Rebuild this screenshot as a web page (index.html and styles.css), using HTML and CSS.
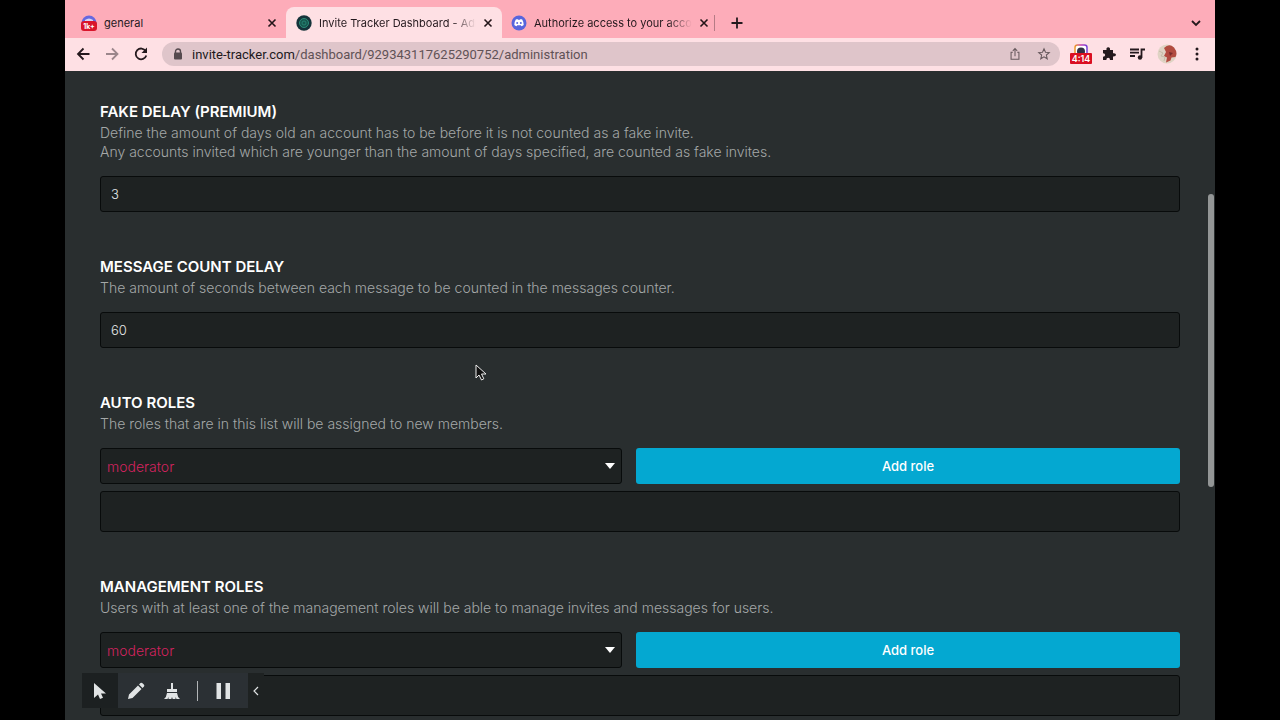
FILE: index.html
```html
<!DOCTYPE html>
<html lang="en">
<head>
<meta charset="utf-8">
<title>Invite Tracker Dashboard - Administration</title>
<link rel="stylesheet" href="styles.css">
</head>
<body>
<div class="window">
  <header class="browser">
    <nav class="tabs" aria-label="Tabs">
      <div class="tab tab-first">
        <svg class="favicon" viewBox="0 0 16 16"><circle cx="8" cy="8" r="7.5" fill="#6668df"/><path d="M4 5q4-3 8 0v2H4z" fill="#d7d5f4"/><rect x="0" y="6" width="16" height="10" rx="3" fill="#d9152b"/><text x="8" y="14" class="favicon-count">1k+</text></svg>
        <span class="tab-title">general</span>
        <button class="close" aria-label="Close general"><svg viewBox="0 0 10 10"><path d="M1.5 1.5l7 7m0-7l-7 7"/></svg></button>
      </div>
      <div class="tab tab-active">
        <svg class="favicon" viewBox="0 0 16 16"><circle cx="8" cy="8" r="7.7" fill="#15333a"/><circle cx="8" cy="8" r="4.5" fill="#17584f" stroke="#2b8b78"/><circle cx="8" cy="8" r="2" fill="none" stroke="#2a8b78" stroke-width=".8"/></svg>
        <span class="tab-title fade">Invite Tracker Dashboard - Administration</span>
        <button class="close" aria-label="Close Invite Tracker"><svg viewBox="0 0 10 10"><path d="M1.5 1.5l7 7m0-7l-7 7"/></svg></button>
      </div>
      <div class="tab tab-last">
        <svg class="favicon" viewBox="0 0 16 16"><circle cx="8" cy="8" r="7.5" fill="#5865dc"/><path d="M4.8 4.6l1.7-.5.4.7h2.2l.4-.7 1.7.5q1.6 2.6 1.5 5.5-1 .9-2.3 1.2l-.6-1H6.200l-.6 1q-1.300-.3-2.300-1.200-.1-2.900 1.500-5.500z" fill="#fff"/><circle cx="6.200" cy="8" r="1" fill="#5865dc"/><circle cx="9.800" cy="8" r="1" fill="#5865dc"/></svg>
        <span class="tab-title fade">Authorize access to your account</span>
        <button class="close" aria-label="Close Authorize access"><svg viewBox="0 0 10 10"><path d="M1.5 1.5l7 7m0-7l-7 7"/></svg></button>
      </div>
      <button class="icon new-tab" aria-label="New tab"><svg viewBox="0 0 16 16"><path d="M8 2.500v11M2.500 8h11" class="line"/></svg></button>
      <button class="icon tab-search" aria-label="Search tabs"><svg viewBox="0 0 16 16"><path d="M4 6l4 4 4-4" class="line"/></svg></button>
    </nav>
    <div class="toolbar">
      <button class="icon" aria-label="Back"><svg viewBox="0 0 16 16"><path d="M14.500 8H3M8.500 2.500L3 8l5.500 5.500" class="line"/></svg></button>
      <button class="icon muted" aria-label="Forward"><svg viewBox="0 0 16 16"><path d="M2 8h11.500M8 2.500L13.500 8 8 13.500" class="line"/></svg></button>
      <button class="icon" aria-label="Reload"><svg viewBox="0 0 16 16"><path d="M12.700 5A5.400 5.400 0 1 0 13.300 9.500" class="line"/><path d="M14 1.500V7H8.500z" fill="currentColor"/></svg></button>
      <div class="address">
        <svg class="lock" viewBox="0 0 12 12"><path d="M3.500 5V3.500a2.500 2.500 0 0 1 5 0V5" fill="none" stroke="#554a4e" stroke-width="1.400"/><rect x="2" y="4.500" width="8" height="7" rx="1" fill="#554a4e"/></svg>
        <a class="url" href="#"><span class="host">invite-tracker.com</span>/dashboard/929343117625290752/administration</a>
        <button class="icon soft" aria-label="Share"><svg viewBox="0 0 16 16"><path d="M5.500 6H3.500v8h9V6h-2M8 10.500V2M5.500 4.300L8 1.800l2.500 2.500" class="thin"/></svg></button>
        <button class="icon soft" aria-label="Bookmark"><svg viewBox="0 0 16 16"><path d="M8 2l1.700 4 4.300.4-3.300 2.800 1 4.300L8 11.200l-3.700 2.300 1-4.300L2 6.400 6.300 6z" class="thin"/></svg></button>
      </div>
      <div class="extensions">
        <button class="icon recorder" aria-label="Recorder"><svg viewBox="0 0 22 20"><defs><linearGradient id="ring"><stop stop-color="#ee9d26"/><stop offset=".5" stop-color="#c339b4"/><stop offset="1" stop-color="#7342d8"/></linearGradient></defs><path d="M5 12V3.500Q5 1 7.500 1h7Q17 1 17 3.500V12" fill="#fff" stroke="url(#ring)" stroke-width="1.500"/><circle cx="11" cy="7.500" r="4" fill="#303044"/><rect y="9" width="22" height="11" rx="1" fill="#da0f22"/><text x="11" y="18" class="recorder-time">4:14</text></svg></button>
        <button class="icon" aria-label="Extensions"><svg viewBox="0 0 16 16"><path d="M2 4h3.500q-.5-2.800 1.700-2.800T9 4h3v3.300q3-.4 3 1.500T12 10.500V14H9q0-2.300-1.800-2.300T5.300 14H2v-3.300q2.200 0 2.200-1.700T2 7.200z" fill="currentColor"/></svg></button>
        <button class="icon" aria-label="Media"><svg viewBox="0 0 16 16"><path d="M1 3.500h9M1 6.700h9M1 10h5M12.500 11.500v-8H16" class="line"/><circle cx="11" cy="11.500" r="2.200" fill="currentColor"/></svg></button>
        <button class="icon profile" aria-label="Profile"><svg viewBox="0 0 20 20"><circle cx="10" cy="10" r="9.500" fill="#dfd3c4"/><path d="M7 4q5-5 10-.5 4 5 1.500 9.500l-4 .5-1 3-4.500 2 1-5-3-1.500 2-4z" fill="#b24b40"/><path d="M2 7l4 2-2 3 4 1-1 4" fill="none" stroke="#c4bda8"/><path d="M12 8l4 1-3 3" fill="#792b2b"/></svg></button>
        <button class="icon" aria-label="Menu"><svg viewBox="0 0 16 16"><g fill="currentColor"><circle cx="8" cy="3" r="1.500"/><circle cx="8" cy="8" r="1.500"/><circle cx="8" cy="13" r="1.500"/></g></svg></button>
      </div>
    </div>
  </header>
  <main class="page">
    <section class="setting">
      <h2><label for="fake-delay">FAKE DELAY (PREMIUM)</label></h2>
      <p>Define the amount of days old an account has to be before it is not counted as a fake invite.<br>Any accounts invited which are younger than the amount of days specified, are counted as fake invites.</p>
      <input class="field" id="fake-delay" type="text" value="3">
    </section>
    <section class="setting">
      <h2><label for="count-delay">MESSAGE COUNT DELAY</label></h2>
      <p>The amount of seconds between each message to be counted in the messages counter.</p>
      <input class="field" id="count-delay" type="text" value="60">
    </section>
    <section class="setting">
      <h2><label for="auto-role">AUTO ROLES</label></h2>
      <p>The roles that are in this list will be assigned to new members.</p>
      <div class="role-row">
        <div class="select"><select class="field" id="auto-role"><option>moderator</option></select><svg viewBox="0 0 10 6"><path d="M0 0h10L5 6z" fill="#fff"/></svg></div>
        <button class="add">Add role</button>
      </div>
      <div class="role-list"></div>
    </section>
    <section class="setting">
      <h2><label for="management-role">MANAGEMENT ROLES</label></h2>
      <p>Users with at least one of the management roles will be able to manage invites and messages for users.</p>
      <div class="role-row">
        <div class="select"><select class="field" id="management-role"><option>moderator</option></select><svg viewBox="0 0 10 6"><path d="M0 0h10L5 6z" fill="#fff"/></svg></div>
        <button class="add">Add role</button>
      </div>
      <div class="role-list"></div>
    </section>
    <div class="scrollbar"></div>
    <svg class="pointer" viewBox="0 0 12 18"><path d="M1 1v13l3-3 2.500 5 2.300-1.200L6.500 10H11z" fill="#111" stroke="#eee"/></svg>
    <div class="recording-bar">
      <button class="tool tool-active" aria-label="Select"><svg viewBox="0 0 18 18"><path d="M3 1v15l4-3.500 2 4.500 3-1.300-2-4.200h5z" fill="currentColor"/></svg></button>
      <button class="tool" aria-label="Draw"><svg viewBox="0 0 18 18"><path d="M1 17l1-4.500 9-9 3.500 3.500-9 9zM12 2.500l1.500-1.500q1-.8 2 .2l1.300 1.300q1 1 .2 2L15.500 6z" fill="currentColor"/></svg></button>
      <button class="tool" aria-label="Clear"><svg viewBox="0 0 18 18"><path d="M8 1h2v6h4v3H4V7h4zM4 11h10q.5 4 3 6h-3.500l-1-2v2H9.700l-.7-2-.7 2H5.500v-2l-1 2H1q2.500-2 3-6z" fill="currentColor"/></svg></button>
      <span class="divider"></span>
      <button class="tool tool-pause" aria-label="Pause"><svg viewBox="0 0 18 18"><path d="M2.500 1H7v16H2.500zM11.500 1H16v16h-4.500z" fill="currentColor"/></svg></button>
      <button class="tool collapse" aria-label="Collapse"><svg viewBox="0 0 8 12"><path d="M6 2L2 6l4 4" fill="none" stroke="currentColor" stroke-width="1.200"/></svg></button>
    </div>
  </main>
</div>
</body>
</html>
```

FILE: styles.css
```css
* { box-sizing: border-box; }
body { margin: 0; background: #000; font-family: Inter, "Liberation Sans", sans-serif; }
button { border: 0; padding: 0; background: none; color: inherit; font: inherit; }
svg { display: block; }

.window { display: flex; flex-direction: column; height: 100vh; margin: 0 65px; overflow: hidden; }
.browser { flex: none; background: #fdacb9; color: #24191d; }
.tabs { display: flex; align-items: stretch; height: 38px; padding-top: 7px; }
.tab { display: flex; align-items: center; gap: 7px; min-width: 0; padding: 0 9px 0 16px; font-size: 11px; }
.tab-first { flex: 0 1 221px; }
.tab-active { flex: 0 1 216px; padding: 0 9px 0 10px; background: #fee0e4; border-radius: 8px 8px 0 0; }
.tab-last { flex: 0 1 213px; padding: 0 6px 0 9px; background: linear-gradient(#b57b85, #b57b85) right center / 1px 16px no-repeat; }
.favicon { flex: none; width: 16px; height: 16px; }
.favicon-count { fill: #fff; font-size: 7px; font-weight: 700; text-anchor: middle; }
.tab-title { flex: 1; min-width: 0; overflow: hidden; white-space: nowrap; }
.fade { mask-image: linear-gradient(to right, #000 calc(100% - 24px), transparent); }
.close { flex: none; width: 10px; height: 10px; }
.close path { fill: none; stroke: #241519; stroke-width: 1.6; }

.icon { flex: none; width: 16px; height: 16px; }
.line { fill: none; stroke: currentColor; stroke-width: 1.8; }
.thin { fill: none; stroke: currentColor; stroke-width: 1.2; }
.new-tab { align-self: center; margin-left: 14px; }
.tab-search { align-self: center; margin: 0 11px 0 auto; }
.muted { color: #9b868b; }
.soft { width: 14px; height: 14px; color: #67595d; }

.toolbar { display: flex; align-items: center; gap: 13px; height: 33px; padding: 0 10px 1px; background: #fee0e4; }
.address { display: flex; flex: 1; align-items: center; gap: 15px; height: 24px; min-width: 0; margin-right: -3px; padding: 0 9px 0 10px; border-radius: 12px; background: #dfc5ca; }
.lock { flex: none; width: 12px; height: 12px; }
.url { flex: 1; min-width: 0; margin-left: -7px; overflow: hidden; color: #5f5256; font-family: Roboto, "Liberation Sans", sans-serif; font-size: 13px; text-decoration: none; white-space: nowrap; }
.host { color: #21191c; }
.extensions { display: flex; align-items: center; gap: 12px; }
.recorder { width: 22px; height: 20px; margin-right: -3px; }
.recorder-time { fill: #fff; font-size: 9px; font-weight: 600; text-anchor: middle; }
.profile { width: 20px; height: 20px; }
.extensions svg { height: 100%; }

.page { position: relative; display: flex; flex: 1; flex-direction: column; gap: 43px; min-height: 0; padding: 29px 35px 0; overflow: hidden; background: #292e2f; }
.setting { flex: none; }
h2 { margin: 0; color: #fff; font-size: 15px; font-weight: 600; line-height: 23px; }
p { margin: 0 0 15px; color: #a4a8a8; font-size: 14px; font-weight: 300; line-height: 19px; }
.field { display: block; width: 100%; height: 36px; padding: 0 10px; border: 1px solid #080b0b; border-radius: 3px; background: #1e2222; color: #e5e8e8; font: 300 13px Inter, "Liberation Sans", sans-serif; }
.role-row { display: grid; grid-template-columns: 522fr 544fr; gap: 14px; margin-bottom: 7px; }
.select { position: relative; }
.select .field { padding: 0 6px; color: #d3225f; font-size: 14px; appearance: none; }
.select svg { position: absolute; top: 15px; right: 7px; width: 10px; height: 6px; pointer-events: none; }
.add { border-radius: 3px; background: #04a8d1; color: #fff; font-size: 13px; font-weight: 500; }
.role-list { height: 41px; border: 1px solid #080b0b; border-radius: 3px; background: #1e2222; }

.scrollbar { position: absolute; top: 123px; right: 1px; width: 6px; height: 293px; border-radius: 3px; background: #939696; }
.pointer { position: absolute; top: 293px; left: 410px; width: 12px; height: 18px; }
.recording-bar { position: absolute; bottom: 12px; left: 17px; display: flex; align-items: center; height: 35px; border-radius: 3px; background: #2b3034; color: #e1e4e5; }
.tool { display: flex; align-items: center; justify-content: center; width: 36px; height: 100%; }
.tool svg { width: 18px; height: 18px; }
.tool-active { background: #1c2021; }
.divider { width: 1px; height: 20px; margin: 0 7px; background: #b2b5b7; }
.tool-pause { margin-right: 7px; }
.collapse { width: 16px; background: #1e2222; }
.collapse svg { width: 8px; height: 12px; }
```
